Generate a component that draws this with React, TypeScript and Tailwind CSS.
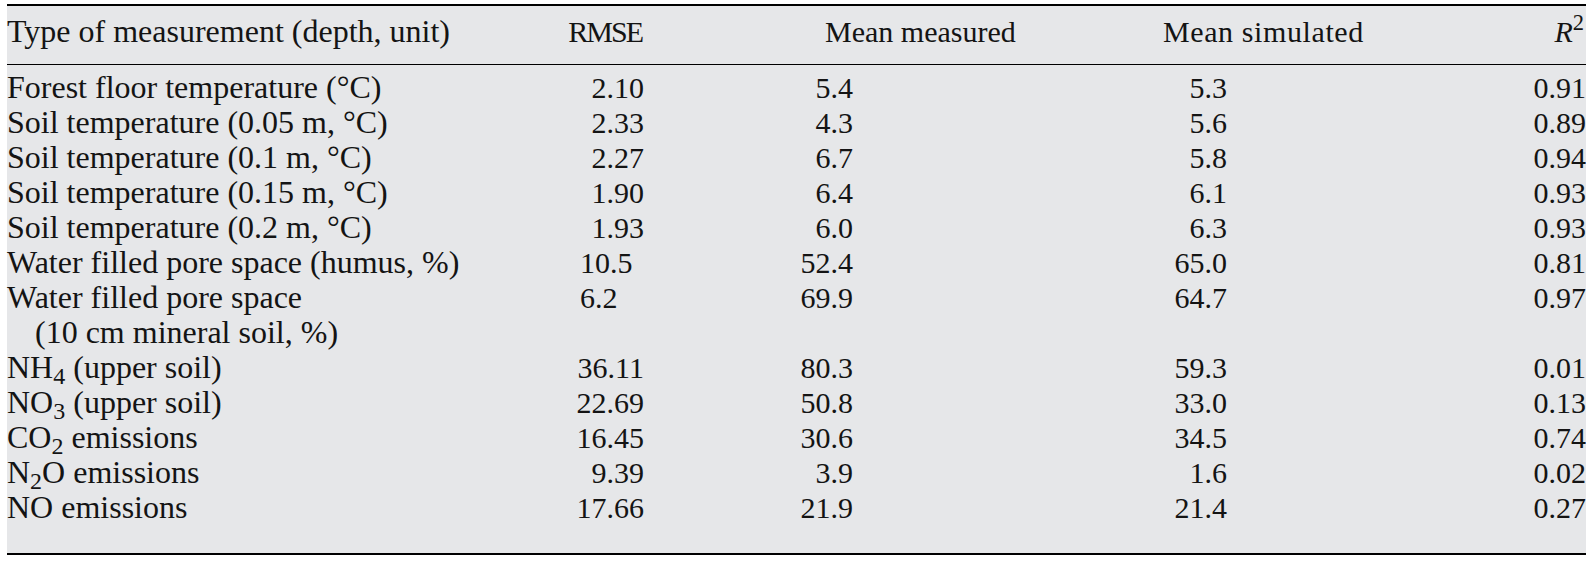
import React from "react";

type Row = {
  label: React.ReactNode;
  second?: React.ReactNode;
  rmse: string;
  rmseLeft?: boolean;
  meas: string;
  sim: string;
  r2: string;
};

const rows: Row[] = [
  { label: <>Forest floor temperature (°C)</>, rmse: "2.10", meas: "5.4", sim: "5.3", r2: "0.91" },
  { label: <>Soil temperature (0.05 m, °C)</>, rmse: "2.33", meas: "4.3", sim: "5.6", r2: "0.89" },
  { label: <>Soil temperature (0.1 m, °C)</>, rmse: "2.27", meas: "6.7", sim: "5.8", r2: "0.94" },
  { label: <>Soil temperature (0.15 m, °C)</>, rmse: "1.90", meas: "6.4", sim: "6.1", r2: "0.93" },
  { label: <>Soil temperature (0.2 m, °C)</>, rmse: "1.93", meas: "6.0", sim: "6.3", r2: "0.93" },
  { label: <>Water filled pore space (humus, %)</>, rmse: "10.5", rmseLeft: true, meas: "52.4", sim: "65.0", r2: "0.81" },
  {
    label: <>Water filled pore space</>,
    second: <>(10 cm mineral soil, %)</>,
    rmse: "6.2",
    rmseLeft: true,
    meas: "69.9",
    sim: "64.7",
    r2: "0.97",
  },
  { label: <>NH<sub>4</sub> (upper soil)</>, rmse: "36.11", meas: "80.3", sim: "59.3", r2: "0.01" },
  { label: <>NO<sub>3</sub> (upper soil)</>, rmse: "22.69", meas: "50.8", sim: "33.0", r2: "0.13" },
  { label: <>CO<sub>2</sub> emissions</>, rmse: "16.45", meas: "30.6", sim: "34.5", r2: "0.74" },
  { label: <>N<sub>2</sub>O emissions</>, rmse: "9.39", meas: "3.9", sim: "1.6", r2: "0.02" },
  { label: <>NO emissions</>, rmse: "17.66", meas: "21.9", sim: "21.4", r2: "0.27" },
];

export default function App() {
  return (
    <div
      className="w-[1586px] h-[570px] bg-white pl-[7px] pt-[4px] text-[#141414]"
      style={{ fontFamily: '"Liberation Serif", "DejaVu Serif", serif' }}
    >
      <div className="bg-[#e6e7e9] border-t-2 border-b-2 border-black text-[30px] leading-[35px]">
        {/* Header */}
        <div className="flex h-[59px] items-center border-b border-black pb-[8px]">
          <div className="w-[553px] text-[32px]">Type of measurement (depth, unit)</div>
          <div className="w-[84px] text-right tracking-[-2px] pr-[2px]">RMSE</div>
          <div className="w-[181px]" />
          <div className="w-[338px]">Mean measured</div>
          <div className="flex-1 tracking-[0.6px]">Mean simulated</div>
          <div className="pr-[2px] text-right">
            <span className="italic">R</span>
            <sup>2</sup>
          </div>
        </div>
        {/* Body */}
        <div className="pt-[5px] pb-[28px]">
          {rows.map((r, i) => (
            <div key={i} className="flex items-start">
              <div className="w-[553px] text-[32px]">
                <div>{r.label}</div>
                {r.second && <div className="pl-[28px]">{r.second}</div>}
              </div>
              <div className={r.rmseLeft ? "w-[84px] pl-[20px] text-left" : "w-[84px] text-right"}>
                {r.rmse}
              </div>
              <div className="w-[209px] text-right">{r.meas}</div>
              <div className="w-[374px] text-right">{r.sim}</div>
              <div className="flex-1 text-right">{r.r2}</div>
            </div>
          ))}
        </div>
      </div>
    </div>
  );
}
